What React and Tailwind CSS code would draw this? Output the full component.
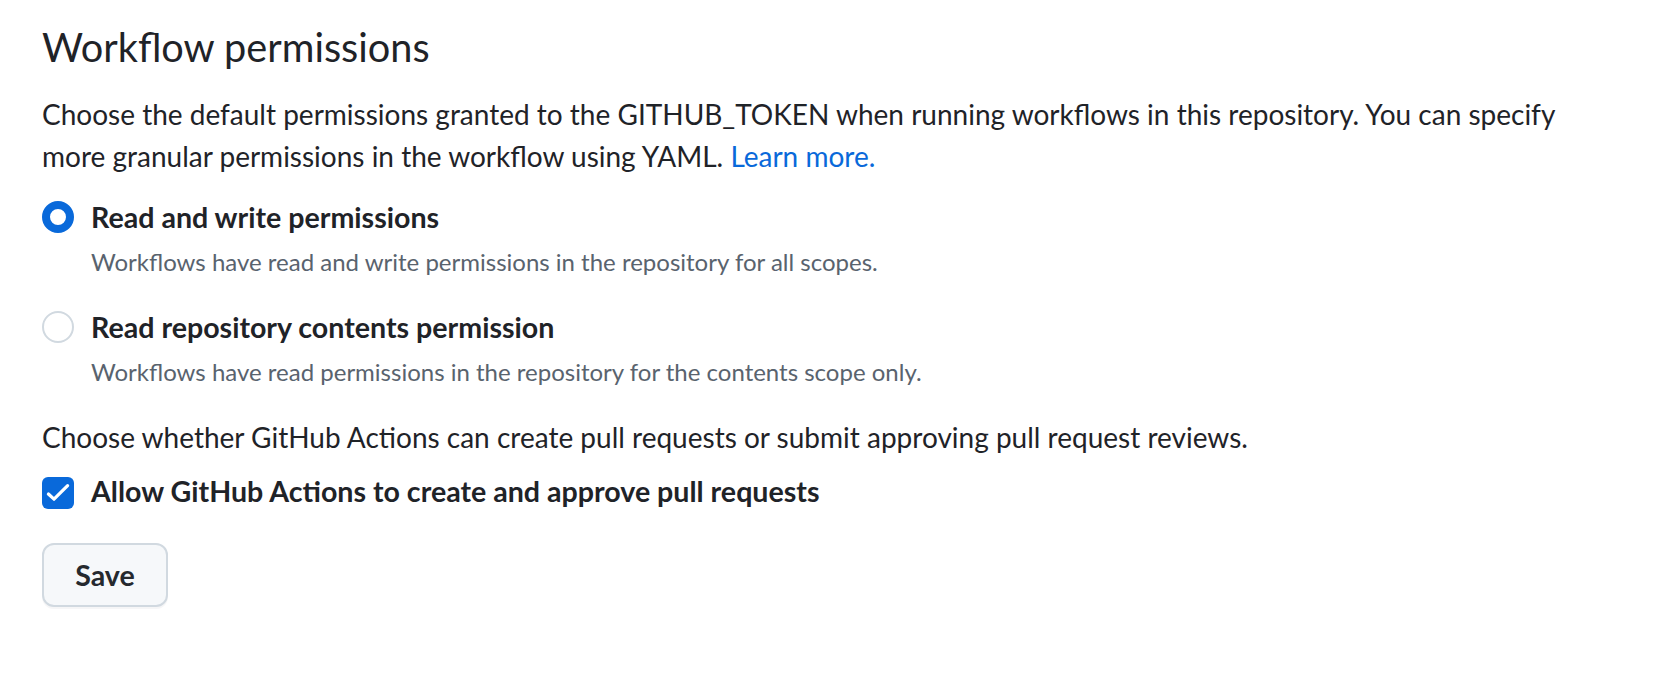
function Radio({ checked }) {
  return checked ? (
    <span className="mt-[5px] block h-8 w-8 shrink-0 rounded-full border-8 border-[#0969da] bg-white" />
  ) : (
    <span className="mt-[5px] block h-8 w-8 shrink-0 rounded-full border-2 border-[#d1d9e0] bg-white" />
  );
}

function Checkbox() {
  return (
    <span className="mt-[7px] flex h-8 w-8 shrink-0 items-center justify-center rounded-[6px] bg-[#0969da]">
      <svg width="32" height="32" viewBox="0 0 16 16" fill="none">
        <path d="M3.2 8.5 L6 11.1 L12.8 4.3" stroke="white" strokeWidth="1.6" strokeLinecap="round" strokeLinejoin="round" />
      </svg>
    </span>
  );
}

export default function App() {
  return (
    <div className="min-h-[677px] bg-white pl-[42px] pt-[17px] text-[#1f2328] font-['Lato',sans-serif]">
      <h2 className="text-[39.7px] leading-[60px] font-normal">Workflow permissions</h2>
      <p className="mt-[16px] max-w-[1520px] text-[28px] leading-[42px]">
        Choose the default permissions granted to the GITHUB_TOKEN when running workflows in this repository. You can specify
        <br />
        more granular permissions in the workflow using YAML. <a className="text-[#0969da]">Learn more.</a>
      </p>

      <div className="mt-[19px]">
        <div className="flex items-start gap-[17px]">
          <Radio checked />
          <span className="text-[28.6px] leading-[42px] font-bold">Read and write permissions</span>
        </div>
        <p className="mt-[6px] pl-[49px] text-[24px] leading-[36px] text-[#59636e]">
          Workflows have read and write permissions in the repository for all scopes.
        </p>
      </div>

      <div className="mt-[26px]">
        <div className="flex items-start gap-[17px]">
          <Radio />
          <span className="text-[28.6px] leading-[42px] font-bold">Read repository contents permission</span>
        </div>
        <p className="mt-[6px] pl-[49px] text-[24px] leading-[36px] text-[#59636e]">
          Workflows have read permissions in the repository for the contents scope only.
        </p>
      </div>

      <p className="mt-[26px] text-[28px] leading-[42px]">
        Choose whether GitHub Actions can create pull requests or submit approving pull request reviews.
      </p>

      <div className="mt-[12px] flex items-start gap-[17px]">
        <Checkbox />
        <span className="text-[28.6px] leading-[42px] font-bold">Allow GitHub Actions to create and approve pull requests</span>
      </div>

      <button className="mt-[31px] flex h-16 w-[126px] items-center justify-center rounded-[12px] border-2 border-[#d1d9e0] bg-[#f6f8fa] text-[28.6px] font-bold text-[#25292e] shadow-[0_2px_0_rgba(31,35,40,0.04)]">
        Save
      </button>
    </div>
  );
}
